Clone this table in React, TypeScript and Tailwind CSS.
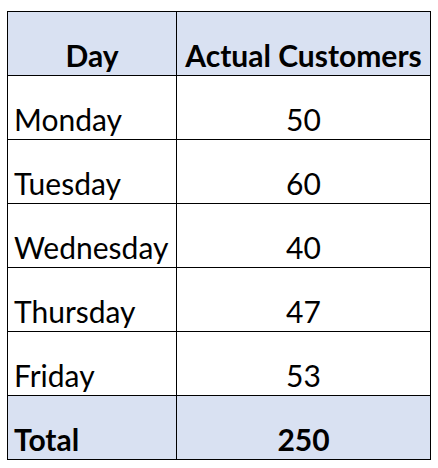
const rows = [
  { day: "Monday", count: 50 },
  { day: "Tuesday", count: 60 },
  { day: "Wednesday", count: 40 },
  { day: "Thursday", count: 47 },
  { day: "Friday", count: 53 },
];

export default function App() {
  return (
    <div className="min-h-[468px] w-[438px] bg-white pl-[7px] pt-[11px] font-['Lato','Liberation_Sans',sans-serif] text-black">
      <table className="border-collapse">
        <colgroup>
          <col className="w-[169px]" />
          <col className="w-[254px]" />
        </colgroup>
        <thead>
          <tr className="h-[64px] bg-[#d9e1f2]">
            <th className="border border-black pb-[5px] text-center align-bottom text-[30px] font-bold leading-none">
              Day
            </th>
            <th className="border border-black pb-[5px] text-center align-bottom text-[30px] font-bold leading-none">
              Actual Customers
            </th>
          </tr>
        </thead>
        <tbody>
          {rows.map((r) => (
            <tr key={r.day} className="h-[64px]">
              <td className="border border-black pb-[5px] pl-[6px] text-left align-bottom text-[30px] leading-none">
                {r.day}
              </td>
              <td className="border border-black pb-[5px] text-center align-bottom text-[30px] leading-none">
                {r.count}
              </td>
            </tr>
          ))}
          <tr className="h-[64px] bg-[#d9e1f2]">
            <td className="border border-black pb-[5px] pl-[6px] text-left align-bottom text-[30px] font-bold leading-none">
              Total
            </td>
            <td className="border border-black pb-[5px] text-center align-bottom text-[30px] font-bold leading-none">
              250
            </td>
          </tr>
        </tbody>
      </table>
    </div>
  );
}
